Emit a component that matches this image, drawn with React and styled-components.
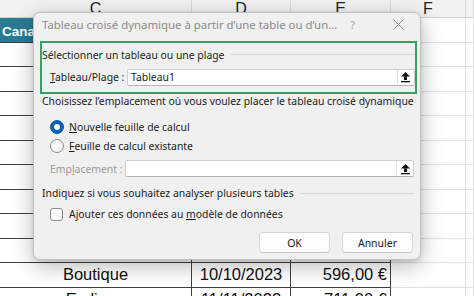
import React from 'react';
import styled, { createGlobalStyle } from 'styled-components';

const GlobalStyle = createGlobalStyle`
  html, body { margin: 0; padding: 0; background: #fff; overflow: hidden; }
  #root { width: 474px; height: 296px; }
`;

const Screen = styled.div`
  position: relative;
  width: 474px;
  height: 296px;
  overflow: hidden;
  background: #fff;
  font-family: "Liberation Sans", Arial, sans-serif;
`;

const Sheet = styled.div`
  display: grid;
  grid-template-columns: 192px 99px 100px 75px 1fr;
  grid-template-rows: 18px repeat(12, 24.5px);
`;

const ColHead = styled.div`
  box-sizing: border-box;
  background: #f2f2f2;
  border-right: 1px solid #dadada;
  border-bottom: 1px solid #d2d2d2;
  display: flex;
  align-items: flex-end;
  justify-content: center;
  font-size: 16px;
  line-height: 1;
  color: #222;
  padding-bottom: 0;
  overflow: hidden;
`;

const Cell = styled.div`
  box-sizing: border-box;
  display: flex;
  align-items: center;
  overflow: hidden;
  white-space: nowrap;
  justify-content: ${p => (p.$align === 'right' ? 'flex-end' : p.$align === 'left' ? 'flex-start' : 'center')};
  padding: 0 3px;
  font-size: 16.5px;
  color: #111;
  border-right: 1px solid ${p => (p.$table ? '#404040' : '#e1e1e1')};
  border-bottom: 1px solid ${p => (p.$table ? '#404040' : '#e1e1e1')};
  background: ${p => (p.$head ? '#2b7b95' : 'transparent')};
  ${p => p.$head && 'color:#fff; font-weight:bold; font-size:13.5px; padding-left:2px; padding-top:4px;'}
`;

const Dialog = styled.div`
  position: absolute;
  left: 33px;
  top: 12px;
  width: 388px;
  height: 248px;
  box-sizing: border-box;
  background: #f0f0f0;
  border: 1px solid #c2c2c2;
  border-radius: 7px;
  box-shadow: 0 6px 22px rgba(0, 0, 0, 0.28), 0 1px 4px rgba(0, 0, 0, 0.12);
  font-family: "Noto Sans", "Open Sans", sans-serif;
  font-size: 10.4px;
  color: #1b1b1b;
  display: flex;
  flex-direction: column;
`;

const TitleBar = styled.div`
  height: 22px;
  display: flex;
  align-items: center;
  padding: 0 16px 0 8px;
  color: #8a8a8a;
  font-size: 11.4px;
  white-space: nowrap;
`;

const TitleText = styled.span`
  flex: 1;
`;

const HelpMark = styled.span`
  color: #a0a0a0;
  font-size: 11px;
  margin-right: 38px;
`;

const Body = styled.div`
  padding: 0 3px 0 6px;
  margin-top: 6px;
  display: flex;
  flex-direction: column;
`;

const GreenBox = styled.div`
  border: 2.5px solid #36a262;
  padding: 4.5px 0.5px 6.5px 0;
  display: flex;
  flex-direction: column;
  gap: 7px;
`;

const Section = styled.div`
  padding: 0 3px 0 2px;
  margin-top: ${p => p.$mt || 0}px;
`;

const GroupLabel = styled.div`
  display: flex;
  align-items: center;
  height: 14px;
  white-space: nowrap;
  &::after {
    content: "";
    flex: 1;
    border-top: 1px solid #d8d8d8;
    margin-left: 6px;
  }
`;

const FieldRow = styled.div`
  display: flex;
  align-items: center;
  height: 17px;
  padding-left: 8px;
  margin-top: ${p => p.$mt || 0}px;
`;

const FieldLabel = styled.span`
  width: ${p => p.$w}px;
  flex: none;
  color: ${p => (p.$disabled ? '#9a9a9a' : '#1b1b1b')};
  white-space: nowrap;
`;

const Input = styled.div`
  flex: 1;
  height: 17px;
  box-sizing: border-box;
  background: #fff;
  border: 1px solid #cfcfcf;
  border-bottom-color: #b5b5b5;
  border-radius: 2px;
  display: flex;
  align-items: center;
`;

const InputText = styled.span`
  flex: 1;
  padding-left: 3px;
`;

const PickButton = styled.div`
  width: 16px;
  height: 100%;
  border-left: 1px solid #e2e2e2;
  display: flex;
  align-items: center;
  justify-content: center;
`;

const OptionRow = styled.div`
  display: flex;
  align-items: center;
  height: 16px;
  padding-left: 8px;
  gap: 5px;
  margin-top: ${p => p.$mt || 0}px;
`;

const Radio = styled.span`
  width: 14px;
  height: 14px;
  box-sizing: border-box;
  border-radius: 50%;
  flex: none;
  display: flex;
  align-items: center;
  justify-content: center;
  background: ${p => (p.$checked ? '#0a5fb4' : '#f7f7f7')};
  border: 1px solid ${p => (p.$checked ? '#0a5fb4' : '#8c8c8c')};
  &::after {
    content: "";
    display: ${p => (p.$checked ? 'block' : 'none')};
    width: 6px;
    height: 6px;
    border-radius: 50%;
    background: #fff;
  }
`;

const Check = styled.span`
  width: 13px;
  height: 13px;
  box-sizing: border-box;
  border: 1px solid #8c8c8c;
  border-radius: 3px;
  background: #fafafa;
  flex: none;
  margin-right: 1px;
`;

const ButtonBar = styled.div`
  display: flex;
  justify-content: flex-end;
  gap: 12px;
  padding-right: 4px;
  margin-top: 10px;
`;

const Button = styled.div`
  width: 71px;
  height: 21px;
  box-sizing: border-box;
  background: #fdfdfd;
  border: 1px solid #d6d6d6;
  border-bottom-color: #c4c4c4;
  border-radius: 4px;
  display: flex;
  align-items: center;
  justify-content: center;
  font-size: 10.5px;
  color: #222;
`;

const UploadIcon = () => (
  <svg width="11" height="12" viewBox="0 0 11 12">
    <path d="M5.5 1 L1 5.6 H10 Z" fill="#111" />
    <rect x="4" y="5.4" width="3" height="3.6" fill="#111" />
    <rect x="1" y="10" width="9" height="1.3" fill="#111" />
  </svg>
);

const CloseIcon = () => (
  <svg width="11" height="11" viewBox="0 0 11 11">
    <path d="M0.5 0.5 L10.5 10.5 M10.5 0.5 L0.5 10.5" stroke="#8a8a8a" strokeWidth="1" />
  </svg>
);

const data = [
  ['', '', ''],
  ['', '', ''],
  ['', '', ''],
  ['', '', ''],
  ['', '', ''],
  ['', '', ''],
  ['', '', ''],
  ['', '', ''],
  ['', '', ''],
  ['Boutique', '10/10/2023', '596,00 €'],
  ['En ligne', '11/11/2023', '711,00 €'],
];

export default function App() {
  return (
    <Screen>
      <GlobalStyle />
      <Sheet>
        {['C', 'D', 'E', 'F', ''].map((l, i) => (
          <ColHead key={i}>{l}</ColHead>
        ))}
        <Cell $table $head $align="left">Canal</Cell>
        <Cell $table $head $align="left" />
        <Cell $table $head $align="left" />
        <Cell />
        <Cell />
        {data.map((r, i) => (
          <React.Fragment key={i}>
            <Cell $table>{r[0]}</Cell>
            <Cell $table>{r[1]}</Cell>
            <Cell $table $align="right">{r[2]}</Cell>
            <Cell />
            <Cell />
          </React.Fragment>
        ))}
      </Sheet>

      <Dialog>
        <TitleBar>
          <TitleText>Tableau croisé dynamique à partir d’une table ou d’un...</TitleText>
          <HelpMark>?</HelpMark>
          <CloseIcon />
        </TitleBar>
        <Body>
          <GreenBox>
            <GroupLabel>Sélectionner un tableau ou une plage</GroupLabel>
            <FieldRow>
              <FieldLabel $w={77}><u>T</u>ableau/Plage :</FieldLabel>
              <Input>
                <InputText>Tableau1</InputText>
                <PickButton><UploadIcon /></PickButton>
              </Input>
            </FieldRow>
          </GreenBox>
          <Section>
            <GroupLabel>Choisissez l’emplacement où vous voulez placer le tableau croisé dynamique</GroupLabel>
            <OptionRow $mt={11}>
              <Radio $checked />
              <span><u>N</u>ouvelle feuille de calcul</span>
            </OptionRow>
            <OptionRow $mt={3}>
              <Radio />
              <span><u>F</u>euille de calcul existante</span>
            </OptionRow>
            <FieldRow $mt={6}>
              <FieldLabel $w={75} $disabled>Emp<u>l</u>acement :</FieldLabel>
              <Input>
                <InputText />
                <PickButton><UploadIcon /></PickButton>
              </Input>
            </FieldRow>
          </Section>
          <Section $mt={9}>
            <GroupLabel>Indiquez si vous souhaitez analyser plusieurs tables</GroupLabel>
            <OptionRow $mt={6}>
              <Check />
              <span>Ajouter ces données au <u>m</u>odèle de données</span>
            </OptionRow>
          </Section>
          <ButtonBar>
            <Button>OK</Button>
            <Button>Annuler</Button>
          </ButtonBar>
        </Body>
      </Dialog>
    </Screen>
  );
}
